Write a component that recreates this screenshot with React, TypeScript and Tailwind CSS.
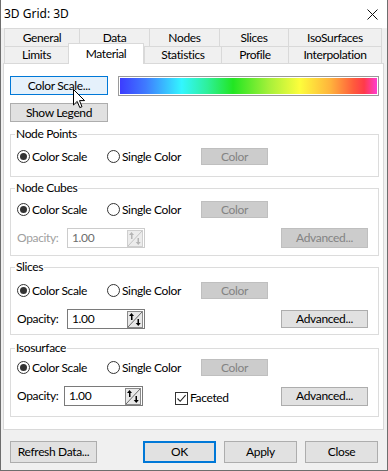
import type { ReactNode } from 'react'

const FONT = "font-['Lato','Noto_Sans',sans-serif]"

const ROW1 = [
  { label: 'General', w: 'w-[75px]' },
  { label: 'Data', w: 'w-[70px]' },
  { label: 'Nodes', w: 'w-[70px]' },
  { label: 'Slices', w: 'w-[69px]' },
  { label: 'IsoSurfaces', w: 'w-[94px]' },
]

const ROW2 = [
  { label: 'Limits', w: 'w-[64px]' },
  { label: 'Material', w: 'w-[76px]', selected: true },
  { label: 'Statistics', w: 'w-[77px]' },
  { label: 'Profile', w: 'w-[67px]' },
  { label: 'Interpolation', w: 'w-[94px]' },
]

function Tab({ label, w, selected, last }: { label: string; w: string; selected?: boolean; last?: boolean }) {
  if (selected) {
    return (
      <div
        className={`${w} relative z-10 -mb-px flex h-[21px] items-start justify-center border border-b-0 border-[#d9d9d9] bg-white pt-[2px] leading-[16px]`}
      >
        {label}
      </div>
    )
  }
  return (
    <div
      className={`${w} flex h-full items-center justify-center border-t border-l border-[#d9d9d9] bg-[#f0f0f0] leading-[16px] ${
        last ? 'border-r' : ''
      }`}
    >
      {label}
    </div>
  )
}

function Radio({ label, checked, w }: { label: string; checked?: boolean; w: string }) {
  return (
    <div className={`${w} flex items-center gap-[2px]`}>
      <span className="flex h-[13px] w-[13px] items-center justify-center rounded-full border border-[#333] bg-white">
        {checked && <span className="h-[7px] w-[7px] rounded-full bg-[#333]" />}
      </span>
      <span className="leading-[16px]">{label}</span>
    </div>
  )
}

function Btn({
  children,
  w,
  h,
  disabled,
  className = '',
}: {
  children: ReactNode
  w: string
  h: string
  disabled?: boolean
  className?: string
}) {
  return (
    <div
      className={`${w} ${h} flex items-center justify-center border leading-[16px] ${
        disabled ? 'border-[#bfbfbf] bg-[#cccccc] text-[#838383]' : 'border-[#adadad] bg-[#e1e1e1] text-black'
      } ${className}`}
    >
      {children}
    </div>
  )
}

function SpinIcon({ disabled }: { disabled?: boolean }) {
  const ink = disabled ? '#b4b4b4' : '#000'
  return (
    <svg width="16" height="17" viewBox="0 0 16 17" className="shrink-0">
      <rect x="0.5" y="0.5" width="15" height="16" fill={disabled ? '#ececec' : '#e8e8e8'} stroke={disabled ? '#cfcfcf' : '#8a8a8a'} />
      <line x1="1" y1="16" x2="15" y2="1" stroke={disabled ? '#c4c4c4' : '#6a6a6a'} />
      <path d="M4.5 2 L2 5 L7 5 Z" fill={ink} />
      <rect x="4" y="5" width="1.5" height="4" fill={ink} />
      <rect x="10.5" y="8" width="1.5" height="4" fill={ink} />
      <path d="M11.25 15 L8.75 12 L13.75 12 Z" fill={ink} />
    </svg>
  )
}

function SpinInput({ w, disabled }: { w: string; disabled?: boolean }) {
  return (
    <div
      className={`${w} flex h-[20px] items-center justify-between border bg-white pr-[1px] pl-[4px] ${
        disabled ? 'border-[#cccccc] text-[#6d6d6d]' : 'border-[#7a7a7a] text-black'
      }`}
    >
      <span className="leading-[16px]">1.00</span>
      <SpinIcon disabled={disabled} />
    </div>
  )
}

function Group({ title, h, mt, children }: { title: string; h: string; mt: string; children: ReactNode }) {
  return (
    <div className={`relative ${mt} ml-[6px] ${h} w-[369px] border border-[#dcdcdc] pl-[6px]`}>
      <span className="absolute -top-[9px] left-[4px] bg-white px-[1px] leading-[16px]">{title}</span>
      {children}
    </div>
  )
}

function ColorRow({ pt }: { pt: string }) {
  return (
    <div className={`flex items-center ${pt}`}>
      <Radio label="Color Scale" checked w="w-[90px]" />
      <Radio label="Single Color" w="w-[94px]" />
      <Btn w="w-[67px]" h="h-[17px]" disabled>
        Color
      </Btn>
    </div>
  )
}

function Cursor() {
  return (
    <svg width="13" height="20" viewBox="0 0 13 20" className="pointer-events-none absolute top-[89px] left-[72px] z-20">
      <path
        d="M0.5 0.5 L0.5 16 L4.2 12.4 L6.8 18.6 L9 17.7 L6.5 11.6 L11.6 11.6 Z"
        fill="#fff"
        stroke="#000"
        strokeLinejoin="round"
      />
    </svg>
  )
}

export default function App() {
  return (
    <div className={`${FONT} relative flex h-[471px] w-[388px] flex-col border-x border-b border-[#6e6e6e] bg-[#f0f0f0] text-[12px] tracking-[-0.35px] text-black`}>
      {/* title bar */}
      <div className="flex h-[28px] items-center justify-between bg-white pl-[3px] pr-[9px]">
        <span className="font-['Noto_Sans',sans-serif] text-[12px] leading-[16px] tracking-normal">3D Grid: 3D</span>
        <svg width="11" height="11" viewBox="0 0 11 11">
          <path d="M0.5 0.5 L10.5 10.5 M10.5 0.5 L0.5 10.5" stroke="#111" strokeWidth="1" />
        </svg>
      </div>

      {/* tabs */}
      <div className="ml-[3px] flex h-[18px]">
        {ROW1.map((t, i) => (
          <Tab key={t.label} label={t.label} w={t.w} last={i === ROW1.length - 1} />
        ))}
      </div>
      <div className="ml-[3px] flex h-[17px] items-end">
        {ROW2.map((t, i) => (
          <Tab key={t.label} label={t.label} w={t.w} selected={t.selected} last={i === ROW2.length - 1} />
        ))}
      </div>

      {/* page */}
      <div className="ml-[2px] flex w-[381px] flex-col border border-[#d9d9d9] bg-white pt-[12px] pb-[12px]">
        <div className="ml-[6px] flex h-[20px] items-start">
          <div className="flex h-[19px] w-[98px] items-center justify-center border border-[#0078d7] bg-[#e5f1fb] leading-[16px]">
            Color Scale...
          </div>
          <div className="ml-[10px] h-[20px] w-[261px] border border-[#9a9a9a] p-px">
            <div className="h-full w-full bg-[linear-gradient(to_right,#3c3cff_0%,#3f7bff_10%,#33f6ff_24%,#2ef09a_34%,#22e622_44%,#a6f03a_58%,#fdfd3c_70%,#ffb23c_82%,#ff5a3c_91%,#ff3a4a_95%,#ff3cd0_100%)]" />
          </div>
        </div>
        <Btn w="w-[98px]" h="h-[19px]" className="mt-[7px] ml-[6px]">
          Show Legend
        </Btn>

        <Group title="Node Points" h="h-[43px]" mt="mt-[12px]">
          <ColorRow pt="pt-[13px]" />
        </Group>

        <Group title="Node Cubes" h="h-[68px]" mt="mt-[11px]">
          <ColorRow pt="pt-[12px]" />
          <div className="mt-[10px] flex items-center pr-[10px]">
            <span className="w-[50px] leading-[16px] text-[#a0a0a0]">Opacity:</span>
            <SpinInput w="w-[78px]" disabled />
            <Btn w="w-[87px]" h="h-[20px]" disabled className="ml-auto">
              Advanced...
            </Btn>
          </div>
        </Group>

        <Group title="Slices" h="h-[68px]" mt="mt-[11px]">
          <ColorRow pt="pt-[14px]" />
          <div className="mt-[10px] flex items-center pr-[10px]">
            <span className="w-[50px] leading-[16px]">Opacity:</span>
            <SpinInput w="w-[78px]" />
            <Btn w="w-[87px]" h="h-[18px]" className="ml-auto">
              Advanced...
            </Btn>
          </div>
        </Group>

        <Group title="Isosurface" h="h-[69px]" mt="mt-[13px]">
          <ColorRow pt="pt-[10px]" />
          <div className="mt-[10px] flex items-center pr-[10px]">
            <span className="w-[47px] leading-[16px]">Opacity:</span>
            <SpinInput w="w-[79px]" />
            <div className="ml-[32px] flex items-center gap-[2px] pt-[4px]">
              <span className="flex h-[13px] w-[13px] items-center justify-center border border-[#333] bg-white">
                <svg width="11" height="11" viewBox="0 0 11 11">
                  <path d="M1.5 5.5 L4.2 8.3 L9.6 2.2" fill="none" stroke="#222" strokeWidth="1.1" />
                </svg>
              </span>
              <span className="leading-[16px]">Faceted</span>
            </div>
            <Btn w="w-[87px]" h="h-[19px]" className="ml-auto">
              Advanced...
            </Btn>
          </div>
        </Group>
      </div>

      {/* buttons */}
      <div className="mt-[11px] ml-[9px] flex">
        <Btn w="w-[87px]" h="h-[22px]">
          Refresh Data...
        </Btn>
        <div className="ml-[46px] flex h-[22px] w-[73px] items-center justify-center border-2 border-[#0078d7] bg-[#e1e1e1] leading-[16px]">
          OK
        </div>
        <Btn w="w-[73px]" h="h-[22px]" className="ml-[8px]">
          Apply
        </Btn>
        <Btn w="w-[73px]" h="h-[22px]" className="ml-[8px]">
          Close
        </Btn>
      </div>

      <Cursor />
    </div>
  )
}
